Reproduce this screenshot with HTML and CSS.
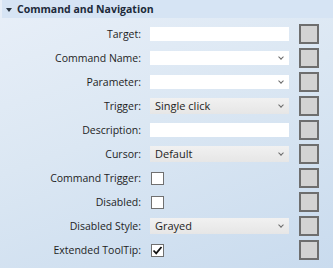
FILE: index.html
```html
<!DOCTYPE html>
<html>
<head>
<meta charset="utf-8">
<link rel="stylesheet" href="styles.css">
</head>
<body>
<div class="panel">
  <div class="header"><span class="tri"></span><span class="title">Command and Navigation</span></div>
  <div class="rows">
    <div class="row"><div class="label">Target:</div><div class="field"><div class="input"></div></div><div class="sq"></div></div>
    <div class="row"><div class="label">Command Name:</div><div class="field"><div class="input select"><span class="chev"></span></div></div><div class="sq"></div></div>
    <div class="row"><div class="label">Parameter:</div><div class="field"><div class="input select"><span class="chev"></span></div></div><div class="sq"></div></div>
    <div class="row"><div class="label">Trigger:</div><div class="field"><div class="input select gray"><span class="val">Single click</span><span class="chev"></span></div></div><div class="sq"></div></div>
    <div class="row"><div class="label">Description:</div><div class="field"><div class="input"></div></div><div class="sq"></div></div>
    <div class="row"><div class="label">Cursor:</div><div class="field"><div class="input select gray"><span class="val">Default</span><span class="chev"></span></div></div><div class="sq"></div></div>
    <div class="row"><div class="label">Command Trigger:</div><div class="field"><div class="check"></div></div><div class="sq"></div></div>
    <div class="row"><div class="label">Disabled:</div><div class="field"><div class="check"></div></div><div class="sq"></div></div>
    <div class="row"><div class="label">Disabled Style:</div><div class="field"><div class="input select gray"><span class="val">Grayed</span><span class="chev"></span></div></div><div class="sq"></div></div>
    <div class="row"><div class="label">Extended ToolTip:</div><div class="field"><div class="check"><svg width="11" height="11" viewBox="0 0 11 11"><path d="M1.5 5.5 L4.2 8.3 L9.5 2" fill="none" stroke="#111" stroke-width="1.8"/></svg></div></div><div class="sq"></div></div>
  </div>
</div>
</body>
</html>
```
FILE: styles.css
```css
html, body { margin: 0; padding: 0; }
body {
  width: 333px; height: 272px; overflow: hidden;
  font-family: "Open Sans", "Noto Sans", sans-serif;
  font-size: 10.5px; color: #1e1e1e;
}
.panel {
  height: 268px;
  background: linear-gradient(160deg, #e8eff8 0%, #dbe7f3 45%, #c9dbee 100%);
  border-bottom: 2px solid #ffffff;
  padding-left: 2px;
}
.header {
  height: 18px; display: flex; align-items: center;
  background: #d6e4f4;
  padding-left: 4px;
}
.tri {
  width: 0; height: 0;
  border-left: 3.5px solid transparent; border-right: 3.5px solid transparent;
  border-top: 4px solid #2a3540;
  margin-right: 5px; margin-top: 1px;
}
.title { font-weight: bold; color: #1c2a3a; font-size: 10.5px; }
.rows { padding-top: 6px; display: flex; flex-direction: column; gap: 4px; }
.row { display: flex; align-items: center; height: 20px; }
.label { width: 140px; text-align: right; padding-right: 1px; box-sizing: border-box; white-space: nowrap; }
.field { width: 139px; display: flex; align-items: center; margin-left: 8px; }
.input {
  width: 139px; height: 14px; background: #fff; position: relative;
  display: flex; align-items: center;
}
.select.gray { background: linear-gradient(#f1f1f1, #e6e6e6); height: 16px; }
.val { padding-left: 5px; line-height: 16px; font-size: 11px; }
.chev {
  position: absolute; right: 6px; top: 50%;
  width: 3px; height: 3px; margin-top: -3px;
  border-right: 1.2px solid #6a6a6a; border-bottom: 1.2px solid #6a6a6a;
  transform: rotate(45deg);
}
.check {
  width: 11px; height: 11px; margin-left: 1px;
  background: #fff; border: 1px solid #707070;
  display: flex; align-items: center; justify-content: center;
}
.sq {
  width: 16px; height: 16px; margin-left: 10px;
  background: #d3d3d3; border: 2px solid #6e6e6e;
}
```
